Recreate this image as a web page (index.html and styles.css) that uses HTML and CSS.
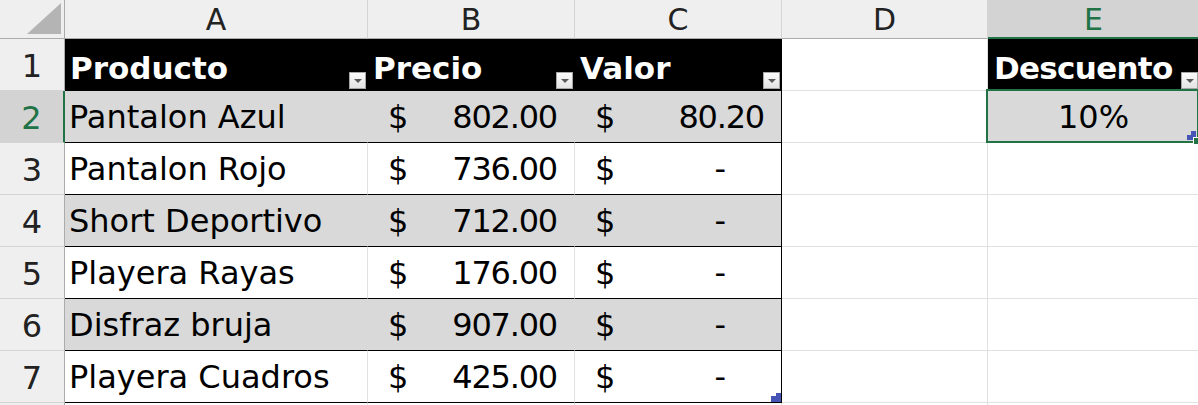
FILE: index.html
```html
<!DOCTYPE html>
<html lang="es">
<head>
<meta charset="utf-8">
<title>Hoja</title>
<link rel="stylesheet" href="styles.css">
</head>
<body>
<div class="sheet">
  <!-- column headers -->
  <div class="corner"><span class="tri"></span></div>
  <div class="colhead">A</div>
  <div class="colhead">B</div>
  <div class="colhead">C</div>
  <div class="colhead">D</div>
  <div class="colhead sel">E</div>

  <!-- row 1 -->
  <div class="rowhead">1</div>
  <div class="cell th">Producto<span class="filter"></span></div>
  <div class="cell th">Precio<span class="filter"></span></div>
  <div class="cell th last">Valor<span class="filter"></span></div>
  <div class="cell"></div>
  <div class="cell th tight">Descuento<span class="filter"></span></div>

  <!-- row 2 -->
  <div class="rowhead sel">2</div>
  <div class="cell td band">Pantalon Azul</div>
  <div class="cell td band money"><span>$</span><span class="num">802.00</span></div>
  <div class="cell td band money last"><span>$</span><span class="num">80.20</span></div>
  <div class="cell"></div>
  <div class="cell td band center active">10%<span class="selbox"></span></div>

  <!-- row 3 -->
  <div class="rowhead">3</div>
  <div class="cell td">Pantalon Rojo</div>
  <div class="cell td money"><span>$</span><span class="num">736.00</span></div>
  <div class="cell td money last"><span>$</span><span class="dash">-</span></div>
  <div class="cell"></div>
  <div class="cell"></div>

  <!-- row 4 -->
  <div class="rowhead">4</div>
  <div class="cell td band">Short Deportivo</div>
  <div class="cell td band money"><span>$</span><span class="num">712.00</span></div>
  <div class="cell td band money last"><span>$</span><span class="dash">-</span></div>
  <div class="cell"></div>
  <div class="cell"></div>

  <!-- row 5 -->
  <div class="rowhead">5</div>
  <div class="cell td">Playera Rayas</div>
  <div class="cell td money"><span>$</span><span class="num">176.00</span></div>
  <div class="cell td money last"><span>$</span><span class="dash">-</span></div>
  <div class="cell"></div>
  <div class="cell"></div>

  <!-- row 6 -->
  <div class="rowhead">6</div>
  <div class="cell td band">Disfraz bruja</div>
  <div class="cell td band money"><span>$</span><span class="num">907.00</span></div>
  <div class="cell td band money last"><span>$</span><span class="dash">-</span></div>
  <div class="cell"></div>
  <div class="cell"></div>

  <!-- row 7 -->
  <div class="rowhead">7</div>
  <div class="cell td">Playera Cuadros</div>
  <div class="cell td money"><span>$</span><span class="num">425.00</span></div>
  <div class="cell td money last end"><span>$</span><span class="dash">-</span><span class="resize"></span></div>
  <div class="cell"></div>
  <div class="cell"></div>

  <!-- row 8 (only its top edge is visible) -->
  <div class="rowhead"></div>
  <div class="cell"></div>
  <div class="cell"></div>
  <div class="cell"></div>
  <div class="cell"></div>
  <div class="cell"></div>
</div>
</body>
</html>
```

FILE: styles.css
```css
* { box-sizing: border-box; }
html, body { margin: 0; padding: 0; background: #fff; overflow: hidden; }

.sheet {
  display: grid;
  grid-template-columns: 65px 303px 207px 207px 206px 212px;
  grid-template-rows: 39px repeat(7, 52px) 52px;
  font-family: "DejaVu Sans", sans-serif;
  font-size: 32px;
  color: #000;
}

.corner {
  position: relative;
  background: #efefef;
  border-right: 1px solid #ababab;
  border-bottom: 1px solid #ababab;
}
.corner .tri {
  position: absolute;
  right: 3px;
  bottom: 4px;
  width: 0;
  height: 0;
  border-left: 34px solid transparent;
  border-bottom: 31px solid #b4b4b4;
}

.colhead {
  background: #efefef;
  border-right: 1px solid #d4d4d4;
  border-bottom: 1px solid #ababab;
  display: flex;
  align-items: center;
  justify-content: center;
  font-size: 30px;
  line-height: 1;
  padding-top: 2px;
  color: #222;
}
.colhead.sel {
  background: #d3d3d3;
  color: #217346;
  border-bottom: 2px solid #217346;
  border-right-color: #bdbdbd;
}

.rowhead {
  background: #efefef;
  border-right: 1px solid #ababab;
  border-bottom: 1px solid #d4d4d4;
  display: flex;
  align-items: center;
  justify-content: center;
  padding-top: 2px;
  color: #222;
}
.rowhead.sel {
  background: #d3d3d3;
  color: #217346;
  border-right: 2px solid #217346;
}

.cell {
  position: relative;
  border-right: 1px solid #e1e1e1;
  border-bottom: 1px solid #e1e1e1;
  white-space: nowrap;
}

.th {
  background: #000;
  color: #fff;
  font-weight: bold;
  font-size: 31px;
  border-right-color: #000;
  border-bottom-color: #000;
  display: flex;
  align-items: flex-end;
  padding: 0 0 6px 5px;
  line-height: 1;
}
.th.tight { letter-spacing: -0.7px; padding-left: 6px; }

.td {
  border-bottom: 1px solid #000;
  display: flex;
  align-items: center;
  padding: 0 0 0 4px;
  line-height: 1;
}
.td.band {
  background: #d9d9d9;
  border-right-color: #d9d9d9;
}
.td.last { border-right-color: #000; }

.money {
  justify-content: space-between;
  padding: 0 17px 0 20px;
}
.money .num { letter-spacing: -1.2px; }
.money .dash { margin-right: 38px; }

.center { justify-content: center; padding: 0; }

.filter {
  position: absolute;
  right: 1px;
  bottom: 1px;
  width: 17px;
  height: 17px;
  border: 1px solid #a6a6a6;
  background: linear-gradient(#fbfbfb, #e3e3e3);
}
.filter::after {
  content: "";
  position: absolute;
  left: 4px;
  top: 6px;
  border-left: 4px solid transparent;
  border-right: 4px solid transparent;
  border-top: 4px solid #5a5a5a;
}

.active { border-bottom-color: #d9d9d9; }
.selbox {
  position: absolute;
  left: -2px;
  top: -2px;
  right: 0;
  bottom: -1px;
  border: 2px solid #217346;
}
.selbox::before {
  content: "";
  position: absolute;
  right: 1px;
  bottom: 1px;
  width: 9px;
  height: 9px;
  background: linear-gradient(to right, transparent 50%, #4654b5 50%) top / 100% 4px no-repeat,
              linear-gradient(#4654b5, #4654b5) bottom / 100% 5px no-repeat;
}
.selbox::after {
  content: "";
  position: absolute;
  right: -4px;
  bottom: -4px;
  width: 6px;
  height: 6px;
  background: #217346;
  border: 1px solid #fff;
}

.resize {
  position: absolute;
  right: 0;
  bottom: 0;
  width: 10px;
  height: 9px;
  background: linear-gradient(to right, transparent 50%, #4654b5 50%) top / 100% 3px no-repeat,
              linear-gradient(#4654b5, #4654b5) bottom / 100% 6px no-repeat;
}
```
